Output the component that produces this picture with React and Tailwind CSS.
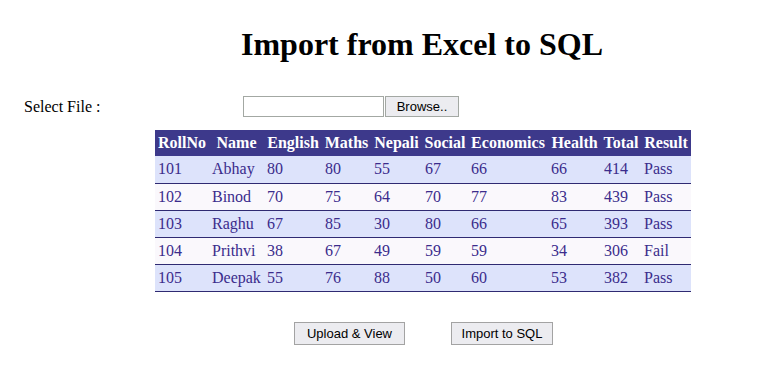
const columns = [
  { key: "roll", label: "RollNo", w: "w-[54px]" },
  { key: "name", label: "Name", w: "w-[55px]" },
  { key: "english", label: "English", w: "w-[58px]" },
  { key: "maths", label: "Maths", w: "w-[49px]" },
  { key: "nepali", label: "Nepali", w: "w-[51px]" },
  { key: "social", label: "Social", w: "w-[46px]" },
  { key: "economics", label: "Economics", w: "w-[80px]" },
  { key: "health", label: "Health", w: "w-[53px]" },
  { key: "total", label: "Total", w: "w-[40px]" },
  { key: "result", label: "Result", w: "w-[50px]" },
];

const rows = [
  ["101", "Abhay", "80", "80", "55", "67", "66", "66", "414", "Pass"],
  ["102", "Binod", "70", "75", "64", "70", "77", "83", "439", "Pass"],
  ["103", "Raghu", "67", "85", "30", "80", "66", "65", "393", "Pass"],
  ["104", "Prithvi", "38", "67", "49", "59", "59", "34", "306", "Fail"],
  ["105", "Deepak", "55", "76", "88", "50", "60", "53", "382", "Pass"],
];

export default function App() {
  return (
    <div className="w-[758px] h-[379px] bg-white font-['Liberation_Serif',serif] text-black">
      <h1 className="pt-[26px] pl-[241px] text-[32px] leading-[37px] font-bold">
        Import from Excel to SQL
      </h1>

      <div className="mt-[33px] flex items-center h-[21px]">
        <span className="pl-[24px] w-[243px] text-[16px] leading-[21px]">Select File :</span>
        <div className="w-[141px] h-[21px] border border-[#a3a8a3] bg-white"></div>
        <button className="ml-[1px] w-[74px] h-[21px] border border-[#a3a8a3] bg-[#ececf0] font-['Liberation_Sans',sans-serif] text-[13px] text-black leading-none">
          Browse..
        </button>
      </div>

      <table className="ml-[155px] mt-[13px] border-collapse text-[16px] text-[#3b2c8c] w-[536px]">
        <thead>
          <tr className="bg-[#3d398b] h-[26px]">
            {columns.map((c) => (
              <th key={c.key} className={`${c.w} px-[1px] text-center font-bold text-white`}>
                {c.label}
              </th>
            ))}
          </tr>
        </thead>
        <tbody>
          {rows.map((r, i) => (
            <tr
              key={r[0]}
              className={`${i % 2 === 0 ? "bg-[#dde3fb]" : "bg-[#faf8fc]"} h-[27px] border-b border-[#2f2a72]`}
            >
              {r.map((v, j) => (
                <td key={j} className="pl-[3px] text-left">
                  {v}
                </td>
              ))}
            </tr>
          ))}
        </tbody>
      </table>

      <div className="mt-[30px] flex font-['Liberation_Sans',sans-serif] text-[13px]">
        <button className="ml-[294px] w-[111px] h-[23px] border border-[#a3a3a3] bg-[#ececf0] text-black leading-none">
          Upload &amp; View
        </button>
        <button className="ml-[46px] w-[102px] h-[23px] border border-[#a3a3a3] bg-[#ececf0] text-black leading-none">
          Import to SQL
        </button>
      </div>
    </div>
  );
}
